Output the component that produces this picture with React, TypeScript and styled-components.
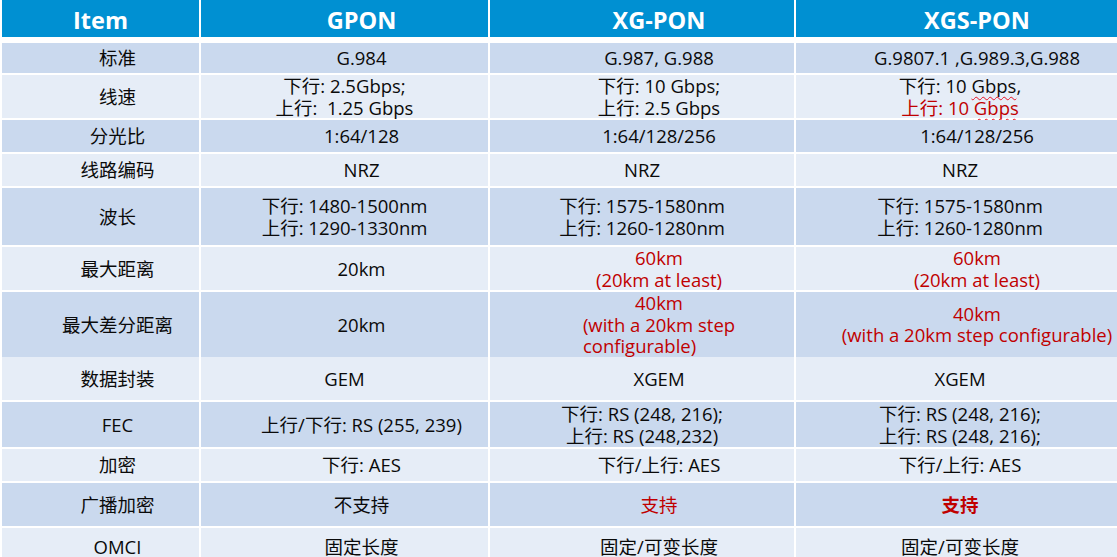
import React from "react";
import styled, { createGlobalStyle, css } from "styled-components";

const GlobalStyle = createGlobalStyle`
  html, body {
    margin: 0;
    padding: 0;
    background: #ffffff;
  }
  body {
    font-family: "Open Sans", "Noto Sans CJK SC", sans-serif;
    overflow: hidden;
  }
`;

const Page = styled.div`
  width: 1117px;
  height: 557px;
  overflow: hidden;
  background: #ffffff;
`;

const Table = styled.div`
  display: flex;
  flex-direction: column;
  gap: 2px;
  width: 1124px;
  padding-left: 2px;
`;

const Row = styled.div<{ $h: number; $header?: boolean }>`
  display: grid;
  grid-template-columns: 197px 287px 304px 328px;
  column-gap: 2px;
  height: ${(p) => p.$h}px;
  ${(p) =>
    p.$header &&
    css`
      margin-bottom: 4px;
    `}
`;

type Tone = "normal" | "red" | "redBold";

const HeadCell = styled.div<{ $shift: boolean }>`
  display: flex;
  align-items: center;
  justify-content: center;
  background: #0090d2;
  color: #ffffff;
  font-weight: 700;
  font-size: 23.5px;
  padding-top: 2px;
  padding-left: ${(p) => (p.$shift ? 34 : 0)}px;
  box-sizing: border-box;
  white-space: nowrap;
`;

const Cell = styled.div<{ $dark: boolean; $shift: boolean; $tone: Tone }>`
  display: flex;
  flex-direction: column;
  align-items: center;
  justify-content: center;
  text-align: center;
  background: ${(p) => (p.$dark ? "#cad9ee" : "#e6edf7")};
  color: ${(p) => (p.$tone === "normal" ? "#0a0a0a" : "#c00000")};
  font-weight: ${(p) => (p.$tone === "redBold" ? 700 : 400)};
  font-size: 18.5px;
  line-height: 21.5px;
  padding-left: ${(p) => (p.$shift ? 34 : 0)}px;
  box-sizing: border-box;
  white-space: pre;
  overflow: visible;
`;

const Line = styled.div<{ $red?: boolean }>`
  color: ${(p) => (p.$red ? "#c00000" : "inherit")};
  height: 21.5px;
`;

const LeftBlock = styled.div`
  text-align: left;
`;

const Wavy = styled.span`
  text-decoration: underline wavy #e81123;
  text-decoration-thickness: 1px;
  text-underline-offset: 3px;
  text-decoration-skip-ink: none;
`;

type CellDef = { c: React.ReactNode; s: boolean; t?: Tone };

const lines = (...items: string[]) => (
  <>
    {items.map((t, i) => (
      <Line key={i}>{t}</Line>
    ))}
  </>
);

const header: { c: string; s: boolean }[] = [
  { c: "Item", s: false },
  { c: "GPON", s: true },
  { c: "XG-PON", s: true },
  { c: "XGS-PON", s: true },
];

const rows: { h: number; cells: CellDef[] }[] = [
  {
    h: 30,
    cells: [
      { c: "标准", s: true },
      { c: "G.984", s: true },
      { c: "G.987, G.988", s: true },
      { c: "G.9807.1 ,G.989.3,G.988", s: true },
    ],
  },
  {
    h: 43,
    cells: [
      { c: "线速", s: true },
      { c: lines("下行: 2.5Gbps;", "上行:  1.25 Gbps"), s: false },
      { c: lines("下行: 10 Gbps;", "上行: 2.5 Gbps"), s: true },
      {
        c: (
          <>
            <Line>
              下行: 10 <Wavy>Gbps</Wavy>,
            </Line>
            <Line $red>
              上行: 10 <Wavy>Gbps</Wavy>
            </Line>
          </>
        ),
        s: false,
      },
    ],
  },
  {
    h: 32,
    cells: [
      { c: "分光比", s: true },
      { c: "1:64/128", s: true },
      { c: "1:64/128/256", s: true },
      { c: "1:64/128/256", s: true },
    ],
  },
  {
    h: 32,
    cells: [
      { c: "线路编码", s: true },
      { c: "NRZ", s: true },
      { c: "NRZ", s: false },
      { c: "NRZ", s: false },
    ],
  },
  {
    h: 57,
    cells: [
      { c: "波长", s: true },
      { c: lines("下行: 1480-1500nm", "上行: 1290-1330nm"), s: false },
      { c: lines("下行: 1575-1580nm", "上行: 1260-1280nm"), s: false },
      { c: lines("下行: 1575-1580nm", "上行: 1260-1280nm"), s: false },
    ],
  },
  {
    h: 43,
    cells: [
      { c: "最大距离", s: true },
      { c: "20km", s: true },
      { c: lines("60km", "(20km at least)"), s: true, t: "red" },
      { c: lines("60km", "(20km at least)"), s: true, t: "red" },
    ],
  },
  {
    h: 63,
    cells: [
      { c: "最大差分距离", s: true },
      { c: "20km", s: true },
      {
        c: (
          <>
            <Line>40km</Line>
            <LeftBlock>
              <Line>(with a 20km step</Line>
              <Line>configurable)</Line>
            </LeftBlock>
          </>
        ),
        s: true,
        t: "red",
      },
      {
        c: lines("40km", "(with a 20km step configurable)"),
        s: true,
        t: "red",
      },
    ],
  },
  {
    h: 43,
    cells: [
      { c: "数据封装", s: true },
      { c: "GEM", s: false },
      { c: "XGEM", s: true },
      { c: "XGEM", s: false },
    ],
  },
  {
    h: 45,
    cells: [
      { c: "FEC", s: true },
      { c: "上行/下行: RS (255, 239)", s: true },
      { c: lines("下行: RS (248, 216);", "上行: RS (248,232)"), s: false },
      { c: lines("下行: RS (248, 216);", "上行: RS (248, 216);"), s: false },
    ],
  },
  {
    h: 32,
    cells: [
      { c: "加密", s: true },
      { c: "下行: AES", s: true },
      { c: "下行/上行: AES", s: true },
      { c: "下行/上行: AES", s: false },
    ],
  },
  {
    h: 43,
    cells: [
      { c: "广播加密", s: true },
      { c: "不支持", s: true },
      { c: "支持", s: true, t: "red" },
      { c: "支持", s: false, t: "redBold" },
    ],
  },
  {
    h: 37,
    cells: [
      { c: "OMCI", s: true },
      { c: "固定长度", s: true },
      { c: "固定/可变长度", s: true },
      { c: "固定/可变长度", s: false },
    ],
  },
];

export default function App() {
  return (
    <Page>
      <GlobalStyle />
      <Table>
        <Row $h={37} $header>
          {header.map((h) => (
            <HeadCell key={h.c} $shift={h.s}>
              {h.c}
            </HeadCell>
          ))}
        </Row>
        {rows.map((r, i) => (
          <Row key={i} $h={r.h}>
            {r.cells.map((cell, j) => (
              <Cell
                key={j}
                $dark={i % 2 === 0}
                $shift={cell.s}
                $tone={cell.t ?? "normal"}
              >
                {cell.c}
              </Cell>
            ))}
          </Row>
        ))}
      </Table>
    </Page>
  );
}
